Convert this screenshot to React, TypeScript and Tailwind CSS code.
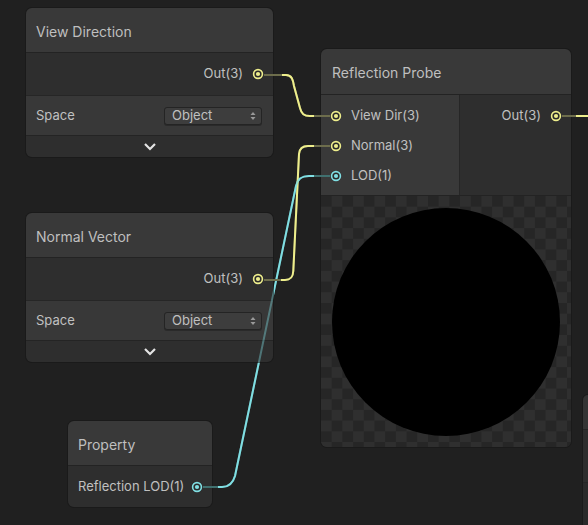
import React from "react";

const YELLOW = "#eeee8c";
const CYAN = "#80dfe3";

type PortProps = { color: string };

const Port = ({ color }: PortProps) => (
  <svg width="12" height="12" viewBox="0 0 12 12" className="shrink-0">
    <circle cx="6" cy="6" r="4.4" fill="#2a2a2a" stroke={color} strokeWidth="1.6" />
    <circle cx="6" cy="6" r="2.1" fill={color} />
  </svg>
);

const Dropdown = () => (
  <div className="flex h-[18px] w-[98px] items-center justify-between rounded-[3px] border border-[#242424] bg-[#3d3d3d] pl-[7px] pr-[5px] text-[13px] text-[#c0c0c0] shadow-[0_1px_0_#2a2a2a]">
    <span>Object</span>
    <svg width="6" height="10" viewBox="0 0 6 10">
      <path d="M3 1 L5.5 4 H0.5 Z" fill="#9a9a9a" />
      <path d="M3 9 L5.5 6 H0.5 Z" fill="#9a9a9a" />
    </svg>
  </div>
);

const Chevron = () => (
  <svg width="14" height="9" viewBox="0 0 14 9">
    <polyline points="2,2 7,7 12,2" fill="none" stroke="#e4e4e4" strokeWidth="2.2" />
  </svg>
);

type SpaceNodeProps = { title: string; className: string };

// node with a single Out(3) port and a Space dropdown
const SpaceNode = ({ title, className }: SpaceNodeProps) => (
  <div
    className={`absolute flex w-[247px] flex-col overflow-hidden rounded-[6px] ring-1 ring-[#1a1a1a] ${className}`}
  >
    <div className="flex h-[45px] items-center border-b border-[#232323] bg-[#393939] pl-[10px] pt-[2px] text-[14px] text-[#bfbfbf]">
      {title}
    </div>
    <div className="flex h-[43px] items-center justify-end gap-[9px] border-b border-[#262626] bg-[#2e2e2e] pr-[9px] text-[13px] text-[#c0c0c0]">
      <span>Out(3)</span>
      <Port color={YELLOW} />
    </div>
    <div className="flex h-[40px] items-center justify-between border-b border-[#242424] bg-[#383838] pl-[10px] pr-[11px] text-[13px] text-[#c0c0c0]">
      <span>Space</span>
      <Dropdown />
    </div>
    <div className="flex h-[21px] items-center justify-center bg-[#2e2e2e]">
      <Chevron />
    </div>
  </div>
);

const inputs = [
  { label: "View Dir(3)", color: YELLOW },
  { label: "Normal(3)", color: YELLOW },
  { label: "LOD(1)", color: CYAN },
];

const ReflectionProbe = () => (
  <div className="absolute left-[321px] top-[49px] flex w-[250px] flex-col overflow-hidden rounded-[6px] ring-1 ring-[#1a1a1a]">
    <div className="flex h-[46px] items-center border-b border-[#232323] bg-[#393939] pl-[11px] pt-[2px] text-[14px] text-[#bfbfbf]">
      Reflection Probe
    </div>
    <div className="flex h-[101px] border-b border-[#232323]">
      <div className="flex w-[139px] flex-col border-r border-[#262626] bg-[#393939] pt-[6px]">
        {inputs.map((p) => (
          <div
            key={p.label}
            className="flex h-[30px] items-center gap-[9px] pl-[9px] text-[13px] text-[#c0c0c0]"
          >
            <Port color={p.color} />
            <span>{p.label}</span>
          </div>
        ))}
      </div>
      <div className="flex flex-1 flex-col bg-[#2e2e2e] pt-[6px]">
        <div className="flex h-[30px] items-center justify-end gap-[9px] pr-[9px] text-[13px] text-[#c0c0c0]">
          <span>Out(3)</span>
          <Port color={YELLOW} />
        </div>
      </div>
    </div>
    <div className="flex h-[251px] items-center justify-center bg-[#262626] bg-[image:conic-gradient(#2f2f2f_25%,#262626_0_50%,#2f2f2f_0_75%,#262626_0)] bg-size-[21.4px_21.4px]">
      <div className="h-[228px] w-[228px] rounded-full bg-black" />
    </div>
  </div>
);

const PropertyNode = () => (
  <div className="absolute left-[68px] top-[421px] flex w-[144px] flex-col overflow-hidden rounded-[6px] ring-1 ring-[#1a1a1a]">
    <div className="flex h-[45px] items-center border-b border-[#232323] bg-[#393939] pl-[10px] pt-[2px] text-[14px] text-[#bfbfbf]">
      Property
    </div>
    <div className="flex h-[41px] items-center justify-between bg-[#2e2e2e] pl-[10px] pr-[9px] text-[13px] text-[#c0c0c0]">
      <span>Reflection LOD(1)</span>
      <Port color={CYAN} />
    </div>
  </div>
);

const wires = [
  {
    d: "M264 75 L286 75 C292 75 293 80 294 86 L300 108 C301.5 114 304 116 310 116 L330 116",
    color: YELLOW,
  },
  {
    d: "M264 280 L285 280 C291 280 293 277 293.3 271 L299 154 C299.4 149 302 146 308 146 L330 146",
    color: YELLOW,
  },
  {
    d: "M203 487 L222 487 C229 487 233 483 235 476 L296 186 C297.5 179 301 176 309 176 L330 176",
    color: CYAN,
  },
  { d: "M562 116 L588 116", color: YELLOW },
];

// darker segments where the wires leave / enter a port
const stubs = [
  { d: "M264 75 L282 75", color: "#6d6d4c" },
  { d: "M314 116 L330 116", color: "#6d6d4c" },
  { d: "M264 280 L281 280", color: "#6d6d4c" },
  { d: "M314 146 L330 146", color: "#6d6d4c" },
  { d: "M203 487 L218 487", color: "#40706f" },
  { d: "M314 176 L330 176", color: "#40706f" },
  { d: "M562 116 L576 116", color: "#6d6d4c" },
];

const App = () => {
  return (
    <div className="relative h-[525px] w-[588px] overflow-hidden bg-[#202020] font-['Inter',sans-serif]">
      <svg className="absolute inset-0" width="588" height="525">
        {wires.map((w, i) => (
          <path key={i} d={w.d} fill="none" stroke={w.color} strokeWidth="2" />
        ))}
      </svg>

      <SpaceNode title="View Direction" className="left-[26px] top-[8px]" />
      <SpaceNode title="Normal Vector" className="left-[26px] top-[213px]" />
      <ReflectionProbe />
      <PropertyNode />

      {/* edge of a node cut off on the right */}
      <div className="absolute left-[583px] top-[395px] flex h-[140px] w-[20px] flex-col overflow-hidden rounded-tl-[5px] ring-1 ring-[#1a1a1a]">
        <div className="h-[35px] border-b border-[#252525] bg-[#343434]" />
        <div className="h-[53px] border-b border-[#252525] bg-[#2d2d2d]" />
        <div className="flex-1 bg-[#2a2a2a]" />
      </div>

      <svg className="pointer-events-none absolute inset-0" width="588" height="525">
        {wires.map((w, i) => (
          <path key={i} d={w.d} fill="none" stroke={w.color} strokeWidth="2" opacity="0.4" />
        ))}
        {stubs.map((s, i) => (
          <path key={i} d={s.d} fill="none" stroke={s.color} strokeWidth="2" />
        ))}
      </svg>
    </div>
  );
};

export default App;
